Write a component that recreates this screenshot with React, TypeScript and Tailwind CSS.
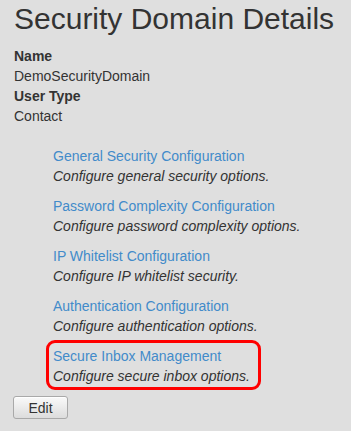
const items = [
  { title: 'General Security Configuration', desc: 'Configure general security options.' },
  { title: 'Password Complexity Configuration', desc: 'Configure password complexity options.' },
  { title: 'IP Whitelist Configuration', desc: 'Configure IP whitelist security.' },
  { title: 'Authentication Configuration', desc: 'Configure authentication options.' },
  { title: 'Secure Inbox Management', desc: 'Configure secure inbox options.', marked: true },
];

export default function App() {
  return (
    <div
      className="min-h-[431px] w-[351px] bg-[#dfdfdf] px-[14px] pt-[2px] text-[14px] leading-[20px] text-[#333]"
      style={{ fontFamily: '"Liberation Sans", Arial, sans-serif' }}
    >
      <h1 className="text-[30px] leading-[33px] font-normal text-[#333] whitespace-nowrap">
        Security Domain Details
      </h1>

      <dl className="mt-[11px]">
        <dt className="font-bold">Name</dt>
        <dd>DemoSecurityDomain</dd>
        <dt className="font-bold">User Type</dt>
        <dd>Contact</dd>
      </dl>

      <ul className="mt-[20px] pl-[39px]">
        {items.map((item) => (
          <li key={item.title} className="relative mb-[10px]">
            <a href="#" className="block text-[#428bca] whitespace-nowrap">
              {item.title}
            </a>
            <div className="italic whitespace-nowrap">{item.desc}</div>
            {item.marked && (
              <span className="pointer-events-none absolute -left-[7px] -top-[6px] h-[50px] w-[215px] rounded-[9px] border-[3px] border-[#ff0000]" />
            )}
          </li>
        ))}
      </ul>

      <button
        type="button"
        className="-ml-px h-[23px] w-[55px] rounded-[3px] border border-[#a9a9a9] bg-gradient-to-b from-[#fafafa] to-[#dcdcdc] text-[14px] leading-[20px] text-[#333] shadow-[inset_0_1px_0_#fff]"
      >
        Edit
      </button>
    </div>
  );
}
